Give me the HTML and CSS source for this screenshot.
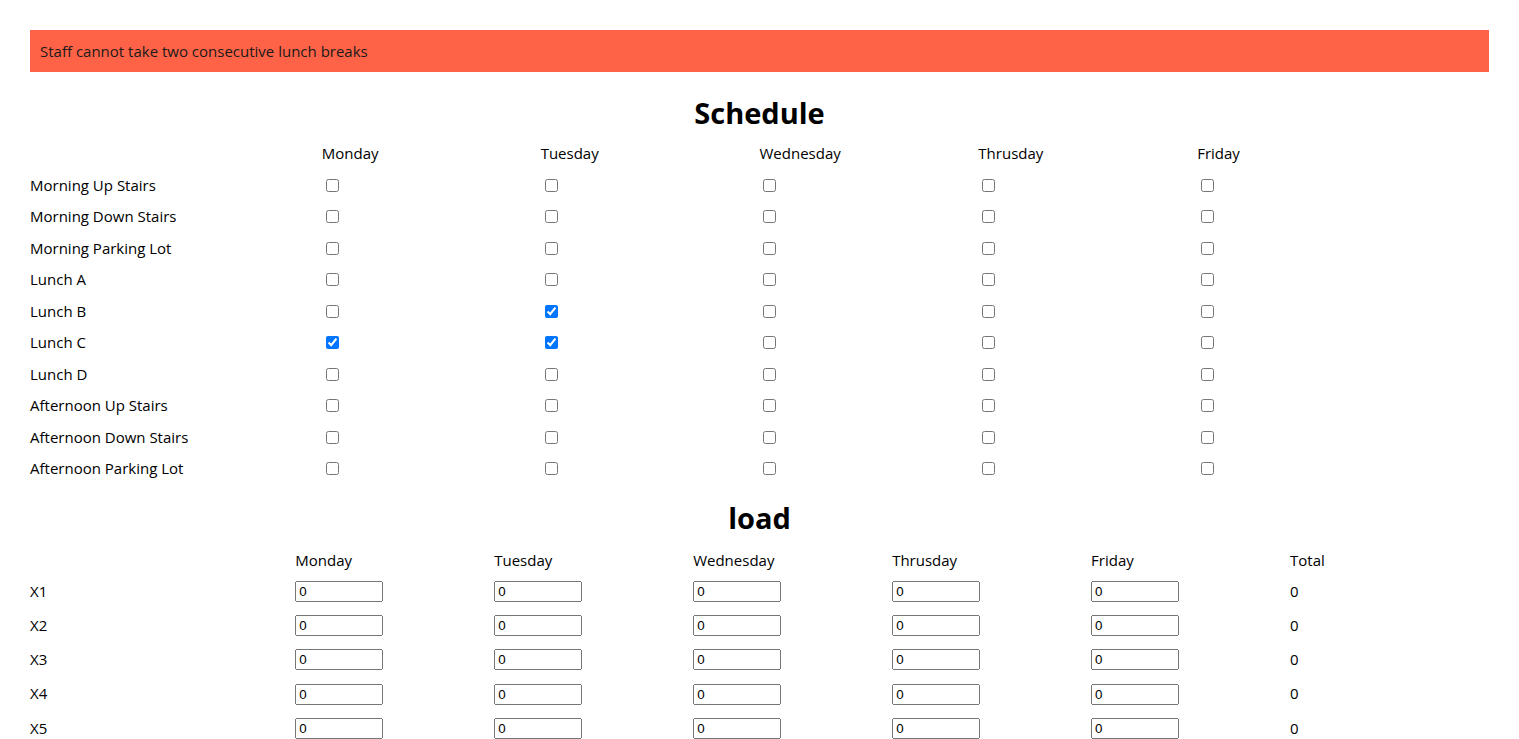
FILE: index.html
```html
<!DOCTYPE html>
<html lang="en">

<head>
  <meta charset="UTF-8">
  <title>Schedule</title>
  <link rel="stylesheet" href="styles.css">
</head>

<body>
  <div class="page">
    <div class="alert">Staff cannot take two consecutive lunch breaks</div>

    <h1 class="title title-schedule">Schedule</h1>
    <div class="schedule">
      <div class="schedule-row schedule-head">
        <div></div>
        <div>Monday</div>
        <div>Tuesday</div>
        <div>Wednesday</div>
        <div>Thrusday</div>
        <div>Friday</div>
      </div>
      <div class="schedule-row">
        <div>Morning Up Stairs</div>
        <div><input type="checkbox"></div>
        <div><input type="checkbox"></div>
        <div><input type="checkbox"></div>
        <div><input type="checkbox"></div>
        <div><input type="checkbox"></div>
      </div>
      <div class="schedule-row">
        <div>Morning Down Stairs</div>
        <div><input type="checkbox"></div>
        <div><input type="checkbox"></div>
        <div><input type="checkbox"></div>
        <div><input type="checkbox"></div>
        <div><input type="checkbox"></div>
      </div>
      <div class="schedule-row">
        <div>Morning Parking Lot</div>
        <div><input type="checkbox"></div>
        <div><input type="checkbox"></div>
        <div><input type="checkbox"></div>
        <div><input type="checkbox"></div>
        <div><input type="checkbox"></div>
      </div>
      <div class="schedule-row">
        <div>Lunch A</div>
        <div><input type="checkbox"></div>
        <div><input type="checkbox"></div>
        <div><input type="checkbox"></div>
        <div><input type="checkbox"></div>
        <div><input type="checkbox"></div>
      </div>
      <div class="schedule-row">
        <div>Lunch B</div>
        <div><input type="checkbox"></div>
        <div><input type="checkbox" checked></div>
        <div><input type="checkbox"></div>
        <div><input type="checkbox"></div>
        <div><input type="checkbox"></div>
      </div>
      <div class="schedule-row">
        <div>Lunch C</div>
        <div><input type="checkbox" checked></div>
        <div><input type="checkbox" checked></div>
        <div><input type="checkbox"></div>
        <div><input type="checkbox"></div>
        <div><input type="checkbox"></div>
      </div>
      <div class="schedule-row">
        <div>Lunch D</div>
        <div><input type="checkbox"></div>
        <div><input type="checkbox"></div>
        <div><input type="checkbox"></div>
        <div><input type="checkbox"></div>
        <div><input type="checkbox"></div>
      </div>
      <div class="schedule-row">
        <div>Afternoon Up Stairs</div>
        <div><input type="checkbox"></div>
        <div><input type="checkbox"></div>
        <div><input type="checkbox"></div>
        <div><input type="checkbox"></div>
        <div><input type="checkbox"></div>
      </div>
      <div class="schedule-row">
        <div>Afternoon Down Stairs</div>
        <div><input type="checkbox"></div>
        <div><input type="checkbox"></div>
        <div><input type="checkbox"></div>
        <div><input type="checkbox"></div>
        <div><input type="checkbox"></div>
      </div>
      <div class="schedule-row">
        <div>Afternoon Parking Lot</div>
        <div><input type="checkbox"></div>
        <div><input type="checkbox"></div>
        <div><input type="checkbox"></div>
        <div><input type="checkbox"></div>
        <div><input type="checkbox"></div>
      </div>
    </div>

    <h1 class="title title-load">load</h1>
    <div class="load">
      <div class="load-row load-head">
        <div></div>
        <div>Monday</div>
        <div>Tuesday</div>
        <div>Wednesday</div>
        <div>Thrusday</div>
        <div>Friday</div>
        <div>Total</div>
      </div>
      <div class="load-row">
        <div>X1</div>
        <div><input type="text" value="0"></div>
        <div><input type="text" value="0"></div>
        <div><input type="text" value="0"></div>
        <div><input type="text" value="0"></div>
        <div><input type="text" value="0"></div>
        <div>0</div>
      </div>
      <div class="load-row">
        <div>X2</div>
        <div><input type="text" value="0"></div>
        <div><input type="text" value="0"></div>
        <div><input type="text" value="0"></div>
        <div><input type="text" value="0"></div>
        <div><input type="text" value="0"></div>
        <div>0</div>
      </div>
      <div class="load-row">
        <div>X3</div>
        <div><input type="text" value="0"></div>
        <div><input type="text" value="0"></div>
        <div><input type="text" value="0"></div>
        <div><input type="text" value="0"></div>
        <div><input type="text" value="0"></div>
        <div>0</div>
      </div>
      <div class="load-row">
        <div>X4</div>
        <div><input type="text" value="0"></div>
        <div><input type="text" value="0"></div>
        <div><input type="text" value="0"></div>
        <div><input type="text" value="0"></div>
        <div><input type="text" value="0"></div>
        <div>0</div>
      </div>
      <div class="load-row">
        <div>X5</div>
        <div><input type="text" value="0"></div>
        <div><input type="text" value="0"></div>
        <div><input type="text" value="0"></div>
        <div><input type="text" value="0"></div>
        <div><input type="text" value="0"></div>
        <div>0</div>
      </div>
    </div>
  </div>
</body>

</html>
```

FILE: styles.css
```css
body {
  margin: 0;
  font-family: "Open Sans", "Noto Sans", sans-serif;
  font-size: 15px;
  color: #000;
  background-color: #fff;
}

.page {
  padding: 30px;
}

.alert {
  height: 42px;
  padding: 0 10px;
  line-height: 42px;
  background-color: #ff6347;
  color: #1a1a1a;
}

.title {
  margin: 0;
  height: 40px;
  line-height: 40px;
  font-size: 29px;
  font-weight: 700;
  text-align: center;
}

.title-schedule {
  margin: 21px 0 4.5px;
}

.title-load {
  margin: 14px 0 8.5px;
}

/* 4 : 3 : 3 ... columns, the schedule keeps a blank unit at the end */
.schedule-row {
  display: grid;
  grid-template-columns: 4fr repeat(5, 3fr) 1fr;
  align-items: center;
  height: 31.5px;
}

.schedule-row input {
  margin: 0 0 3px 4px;
  vertical-align: middle;
}

.load-row {
  display: grid;
  grid-template-columns: 4fr repeat(6, 3fr);
  align-items: center;
  height: 34.25px;
}

.load-head {
  height: 27px;
}

.load-row input[type="text"] {
  box-sizing: border-box;
  width: 88px;
  height: 21px;
  margin: 0;
  vertical-align: middle;
}
```
